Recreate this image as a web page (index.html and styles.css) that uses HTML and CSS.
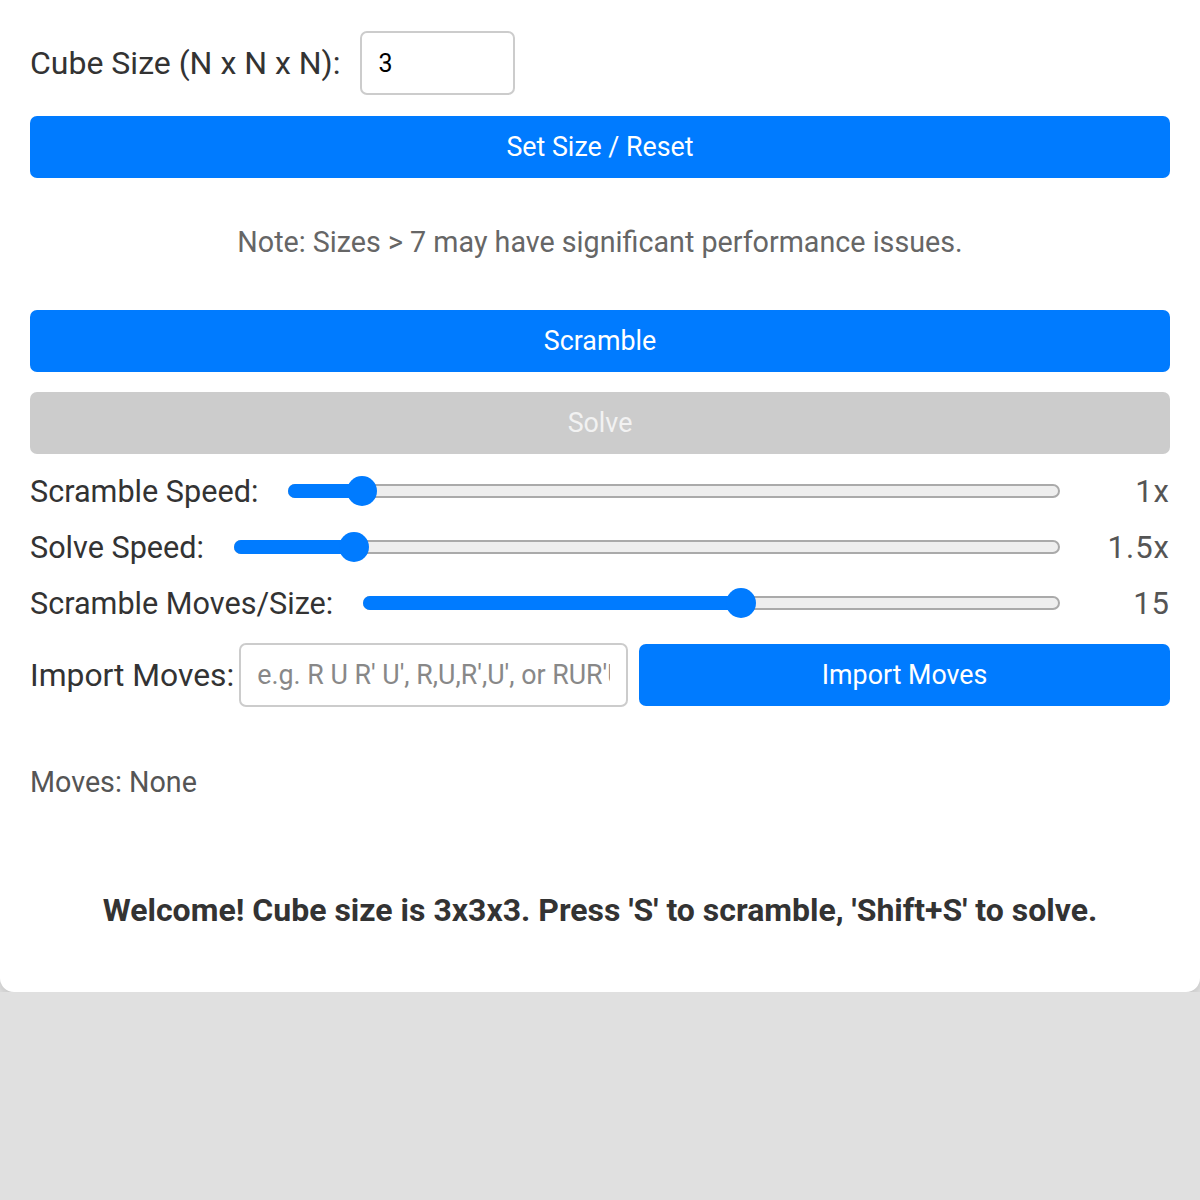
FILE: index.html
```html
<!DOCTYPE html>
<html lang="en">
<head>
<meta charset="utf-8">
<title>Cube Controls</title>
<link rel="stylesheet" href="styles.css">
</head>
<body>
<div class="card">
  <div class="size-row">
    <label class="lbl lbl-size">Cube Size (N x N x N):</label>
    <input class="size-input" type="text" value="3">
  </div>
  <button class="btn">Set Size / Reset</button>
  <p class="note">Note: Sizes &gt; 7 may have significant performance issues.</p>
  <button class="btn">Scramble</button>
  <button class="btn btn-disabled">Solve</button>

  <div class="sliders">
    <div class="slider-row">
      <span class="lbl">Scramble Speed:</span>
      <div class="track"><div class="fill" style="width:9.6%"><span class="thumb"></span></div></div>
      <span class="val">1x</span>
    </div>
    <div class="slider-row">
      <span class="lbl">Solve Speed:</span>
      <div class="track"><div class="fill" style="width:14.6%"><span class="thumb"></span></div></div>
      <span class="val">1.5x</span>
    </div>
    <div class="slider-row">
      <span class="lbl">Scramble Moves/Size:</span>
      <div class="track"><div class="fill" style="width:54.5%"><span class="thumb"></span></div></div>
      <span class="val">15</span>
    </div>
  </div>

  <div class="import-row">
    <span class="lbl lbl-import">Import Moves:</span>
    <input class="moves-input" type="text" placeholder="e.g. R U R' U', R,U,R',U', or RUR'U'">
    <button class="btn btn-import">Import Moves</button>
  </div>

  <div class="moves">Moves: None</div>
  <div class="welcome">Welcome! Cube size is 3x3x3. Press 'S' to scramble, 'Shift+S' to solve.</div>
</div>
</body>
</html>
```
FILE: styles.css
```css
html, body {
  margin: 0;
  padding: 0;
  background: #e0e0e0;
  font-family: Roboto, "Liberation Sans", Arial, sans-serif;
}

.card {
  width: 1200px;
  box-sizing: border-box;
  background: #fff;
  padding: 31px 30px 64px;
  border-radius: 0 0 14px 14px;
  box-shadow: 0 4px 10px rgba(0, 0, 0, 0.12);
  color: #333;
}

.lbl {
  font-size: 30.6px;
  color: #333;
  white-space: nowrap;
}

.lbl-size {
  font-size: 32px;
}

.lbl-import {
  font-size: 31.8px;
}

.size-row {
  display: flex;
  align-items: center;
  gap: 20px;
  height: 64px;
}

.size-input {
  width: 155px;
  height: 64px;
  box-sizing: border-box;
  border: 2px solid #ccc;
  border-radius: 7px;
  padding: 0 16px;
  font-family: inherit;
  font-size: 25px;
  color: #000;
  outline: none;
}

.btn {
  display: block;
  width: 100%;
  height: 62px;
  border: none;
  border-radius: 7px;
  background: #007bff;
  color: #fff;
  font-family: inherit;
  font-size: 26.8px;
  margin-top: 21px;
  cursor: pointer;
}

.btn-disabled {
  background: #cccccc;
  color: #f2f2f2;
  margin-top: 20px;
}

.note {
  margin: 46px 0 50px;
  line-height: 36px;
  height: 36px;
  text-align: center;
  color: #666;
  font-size: 28.7px;
}

.note + .btn {
  margin-top: 0;
}

.sliders {
  display: flex;
  flex-direction: column;
  gap: 16px;
  margin-top: 17px;
}

.slider-row {
  display: flex;
  align-items: center;
  height: 40px;
}

.slider-row .lbl {
  margin-right: 30px;
}

.track {
  flex: 1;
  height: 14px;
  box-sizing: border-box;
  border: 2px solid #aaa;
  border-radius: 7px;
  background: #eee;
  position: relative;
}

.fill {
  position: absolute;
  left: -2px;
  top: -2px;
  height: 14px;
  background: #007bff;
  border-radius: 7px 0 0 7px;
}

.thumb {
  position: absolute;
  right: -15px;
  top: -8px;
  width: 30px;
  height: 30px;
  border-radius: 50%;
  background: #007bff;
}

.val {
  width: 78px;
  margin-left: 32px;
  text-align: right;
  font-size: 31px;
  color: #555;
  letter-spacing: 1px;
}

.import-row {
  display: flex;
  align-items: center;
  margin-top: 20px;
  height: 64px;
}

.import-row .lbl {
  margin-right: 5px;
}

.moves-input {
  width: 389px;
  height: 64px;
  box-sizing: border-box;
  border: 2px solid #ccc;
  border-radius: 7px;
  padding: 0 16px;
  font-family: inherit;
  font-size: 26.8px;
  color: #333;
  outline: none;
}

.moves-input::placeholder {
  color: #888;
}

.btn-import {
  flex: 1;
  width: auto;
  margin: 0 0 0 11px;
}

.moves {
  margin-top: 60px;
  line-height: 30px;
  font-size: 28.7px;
  color: #555;
}

.welcome {
  margin-top: 95px;
  text-align: center;
  font-weight: bold;
  font-size: 32px;
  line-height: 36px;
  color: #333;
}
```
